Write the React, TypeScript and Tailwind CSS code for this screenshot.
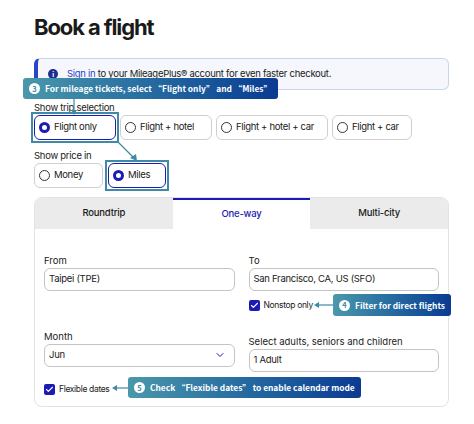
import { ChevronDown, Check } from 'lucide-react'

const TEAL = '#3f8aa6'

function Radio({ on }: { on?: boolean }) {
  return on ? (
    <span className="w-[11px] h-[11px] rounded-full border-[3px] border-[#1c1cb4] bg-white shrink-0" />
  ) : (
    <span className="w-[11px] h-[11px] rounded-full border border-[#333] bg-white shrink-0" />
  )
}

function Option({ label, w, on }: { label: string; w: string; on?: boolean }) {
  return (
    <div
      className={`relative h-[25px] ${w} rounded-[6px] border flex items-center gap-[4px] pl-[4px] text-[9.5px] tracking-[-0.035em] ${
        on ? 'border-[#1c1cb4]' : 'border-[#cfcfcf]'
      }`}
    >
      <Radio on={on} />
      <span>{label}</span>
      {on && <span className="absolute -inset-[4px] border-2 border-[#3f8aa6]" />}
    </div>
  )
}

function Box({ children }: { children: React.ReactNode }) {
  return (
    <div className="h-[23px] rounded-[6px] border border-[#c4c4c4] flex items-center px-[4px] text-[9.5px] tracking-[-0.03em]">
      {children}
    </div>
  )
}

function Checked() {
  return (
    <span className="w-[11px] h-[11px] rounded-[2px] bg-[#1c1cb4] flex items-center justify-center shrink-0">
      <Check size={9} strokeWidth={3} color="white" />
    </span>
  )
}

function Callout({ n, children, className }: { n: number; children: React.ReactNode; className: string }) {
  return (
    <div
      className={`absolute flex items-center gap-[5px] pl-[6px] pr-[6px] rounded-[3px] bg-gradient-to-r from-[#4a98ab] to-[#0c3a92] text-white font-bold text-[8.4px] whitespace-pre font-[family-name:'Noto_Sans_CJK_SC','Noto_Sans',sans-serif] ${className}`}
    >
      <span className="w-[11px] h-[11px] shrink-0 rounded-full bg-white text-[#3f8aa6] text-[7.5px] leading-none flex items-center justify-center">
        {n}
      </span>
      <span>{children}</span>
    </div>
  )
}

export default function App() {
  return (
    <div className="relative w-[474px] h-[424px] bg-white overflow-hidden text-[#1a1a1a] font-[family-name:Inter,sans-serif]">
      <div className="pl-[34px] pr-[25px] pt-[13px]">
        <h1 className="text-[22px] leading-[28px] font-bold tracking-[-0.05em]">Book a flight</h1>

        <div className="mt-[17px] h-[32px] rounded-[6px] border border-[#c9d4e8] border-l-4 border-l-[#2747c9] bg-[#f5f7fc] flex items-center gap-[9px] pl-[10px] text-[9.5px] tracking-[-0.03em]">
          <span className="w-[10px] h-[10px] rounded-full bg-[#1c2f8f] text-white text-[7px] font-bold leading-none flex items-center justify-center">
            i
          </span>
          <span>
            <span className="text-[#2a44c8]">Sign in</span> to your MileagePlus® account for even faster checkout.
          </span>
        </div>

        <div className="mt-[12px] text-[9.5px] leading-[12px] tracking-[-0.03em]">Show trip selection</div>
        <div className="mt-[1px] flex gap-[4px]">
          <Option label="Flight only" w="w-[82px]" on />
          <Option label="Flight + hotel" w="w-[92px]" />
          <Option label="Flight + hotel + car" w="w-[112px]" />
          <Option label="Flight + car" w="w-[80px]" />
        </div>

        <div className="mt-[10px] text-[9.5px] leading-[12px] tracking-[-0.03em]">Show price in</div>
        <div className="mt-[1px] flex gap-[5px]">
          <Option label="Money" w="w-[69px]" />
          <Option label="Miles" w="w-[58px]" on />
        </div>

        <div className="mt-[9px] rounded-[8px] border border-[#e3e3e3] overflow-hidden">
          <div className="grid grid-cols-3 h-[31px] text-[9.5px] font-medium tracking-[-0.02em]">
            <div className="bg-[#ebebeb] flex items-center justify-center">Roundtrip</div>
            <div className="bg-white border-t-2 border-[#1c1cb4] text-[#1c1cb4] flex items-center justify-center">One-way</div>
            <div className="bg-[#ebebeb] flex items-center justify-center">Multi-city</div>
          </div>

          <div className="px-[9px] pt-[26px] pb-[10px]">
            <div className="grid grid-cols-2 gap-x-[14px]">
              <div>
                <div className="text-[9.5px] leading-[12px] mb-[1px]">From</div>
                <Box>Taipei (TPE)</Box>
              </div>
              <div>
                <div className="text-[9.5px] leading-[12px] mb-[1px]">To</div>
                <Box>San Francisco, CA, US (SFO)</Box>
                <div className="mt-[8px] flex items-center gap-[4px] text-[8.5px] tracking-[-0.04em]">
                  <Checked />
                  <span>Nonstop only</span>
                </div>
              </div>
            </div>

            <div className="mt-[19px] grid grid-cols-2 gap-x-[14px]">
              <div>
                <div className="text-[9.5px] leading-[12px] mb-[1px]">Month</div>
                <Box>
                  <span className="flex-1">Jun</span>
                  <ChevronDown size={12} color="#1c1cb4" className="mr-[4px]" />
                </Box>
              </div>
              <div className="pt-[5px]">
                <div className="text-[9.5px] leading-[12px] mb-[1px]">Select adults, seniors and children</div>
                <Box>1 Adult</Box>
              </div>
            </div>

            <div className="mt-[11px] flex items-center gap-[4px] text-[8.5px] tracking-[-0.04em]">
              <Checked />
              <span>Flexible dates</span>
            </div>
          </div>
        </div>
      </div>

      <svg className="absolute inset-0 pointer-events-none" width="474" height="424">
        <g stroke={TEAL} strokeWidth="1.2" fill={TEAL}>
          <line x1="74" y1="99" x2="74" y2="111" />
          <polygon points="71,110 77,110 74,115" stroke="none" />
          <line x1="117" y1="141" x2="133" y2="157" />
          <polygon points="130,158 136,154 137,161" stroke="none" />
          <line x1="333" y1="305" x2="318" y2="305" />
          <polygon points="319,302 319,308 314,305" stroke="none" />
          <line x1="128" y1="388" x2="116" y2="388" />
          <polygon points="117,385 117,391 112,388" stroke="none" />
        </g>
      </svg>

      <Callout n={3} className="left-[23px] top-[78px] h-[21px]">
        {'For mileage tickets, select “Flight only” and “Miles”'}
      </Callout>
      <Callout n={4} className="left-[333px] top-[294px] h-[22px]">
        Filter for direct flights
      </Callout>
      <Callout n={5} className="left-[128px] top-[377px] h-[21px]">
        {'Check “Flexible dates” to enable calendar mode'}
      </Callout>
    </div>
  )
}
